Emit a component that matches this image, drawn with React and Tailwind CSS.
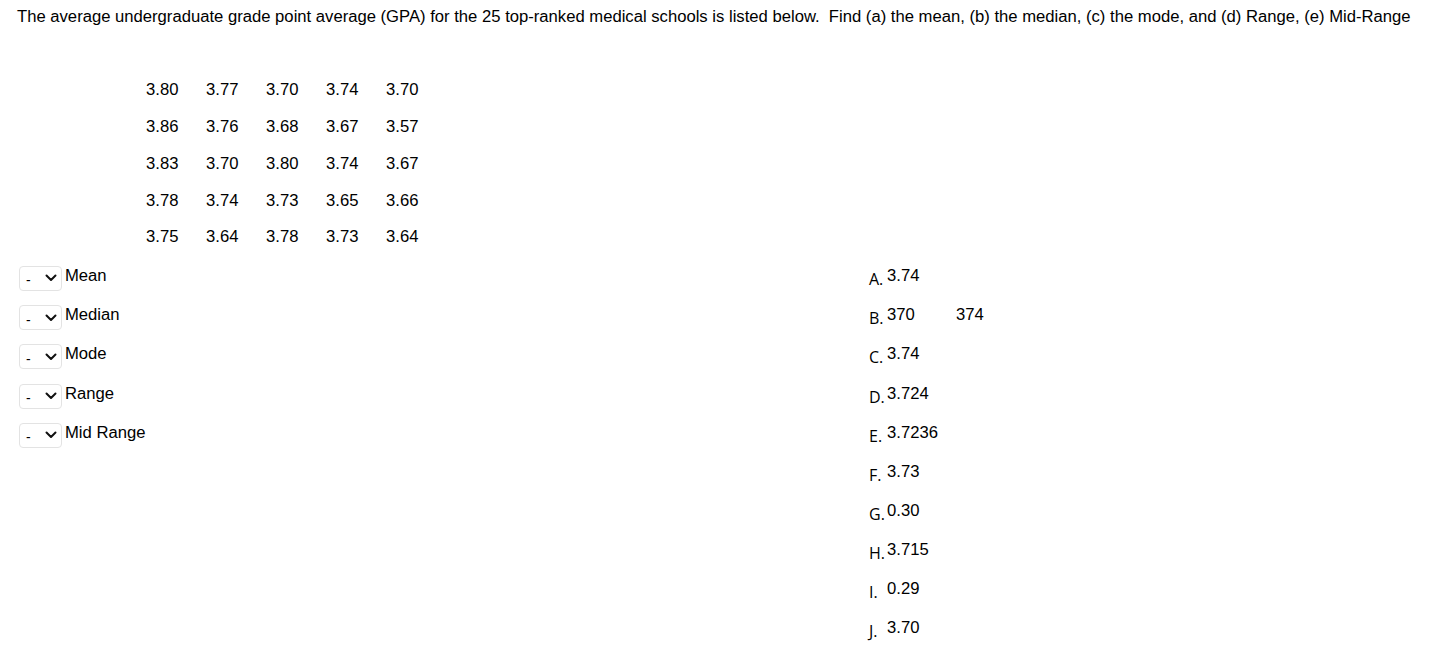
import React from "react";

const rows = [
  ["3.80", "3.77", "3.70", "3.74", "3.70"],
  ["3.86", "3.76", "3.68", "3.67", "3.57"],
  ["3.83", "3.70", "3.80", "3.74", "3.67"],
  ["3.78", "3.74", "3.73", "3.65", "3.66"],
  ["3.75", "3.64", "3.78", "3.73", "3.64"],
];

const labels = ["Mean", "Median", "Mode", "Range", "Mid Range"];

const answers = [
  ["A.", "3.74"],
  ["B.", "370", "374"],
  ["C.", "3.74"],
  ["D.", "3.724"],
  ["E.", "3.7236"],
  ["F.", "3.73"],
  ["G.", "0.30"],
  ["H.", "3.715"],
  ["I.", "0.29"],
  ["J.", "3.70"],
];

function Select() {
  return (
    <div className="flex items-center justify-between w-[43px] h-[25px] border border-[#e3e3e3] rounded-[4px] bg-white pl-[6px] pr-[4px]">
      <span className="text-[14px] leading-none relative top-[2px]">-</span>
      <svg width="12" height="8" viewBox="0 0 12 8">
        <polyline points="1.5,1.5 6,6 10.5,1.5" fill="none" stroke="#111" strokeWidth="2" strokeLinecap="round" strokeLinejoin="round" />
      </svg>
    </div>
  );
}

export default function App() {
  return (
    <div className="bg-white text-black w-[1442px] h-[656px] overflow-hidden text-[16.65px]" style={{ fontFamily: '"Liberation Sans", Arial, sans-serif' }}>
      <div className="pl-[17px] pt-[7px] leading-[20px] whitespace-nowrap">
        The average undergraduate grade point average (GPA) for the 25 top-ranked medical schools is listed below.&nbsp; Find (a) the mean, (b) the median, (c) the mode, and (d) Range, (e) Mid-Range
      </div>
      <div className="pl-[146px] pt-[45px] flex flex-col">
        {rows.map((r, i) => (
          <div key={i} className="flex h-[36.75px] items-center">
            {r.map((v, j) => (
              <div key={j} className="w-[60px] leading-[20px]">{v}</div>
            ))}
          </div>
        ))}
      </div>
      <div className="flex pt-[1px]">
        <div className="w-[869px] pl-[19px] flex flex-col pt-[2px]">
          {labels.map((l) => (
            <div key={l} className="flex items-center h-[39.25px] gap-[3px]">
              <Select />
              <span className="relative -top-[2px]">{l}</span>
            </div>
          ))}
        </div>
        <div className="flex flex-col pt-[1px]">
          {answers.map(([k, v, extra]) => (
            <div key={k} className="flex items-center h-[39.1px]">
              <span className="w-[18px] text-[16px] leading-[20px] relative top-[2px]" style={{ fontFamily: '"Open Sans", "Noto Sans", sans-serif' }}>{k}</span>
              <span className="w-[69px] leading-[20px] relative -top-[1px]">{v}</span>
              {extra && <span className="leading-[20px] relative -top-[1px]">{extra}</span>}
            </div>
          ))}
        </div>
      </div>
    </div>
  );
}
